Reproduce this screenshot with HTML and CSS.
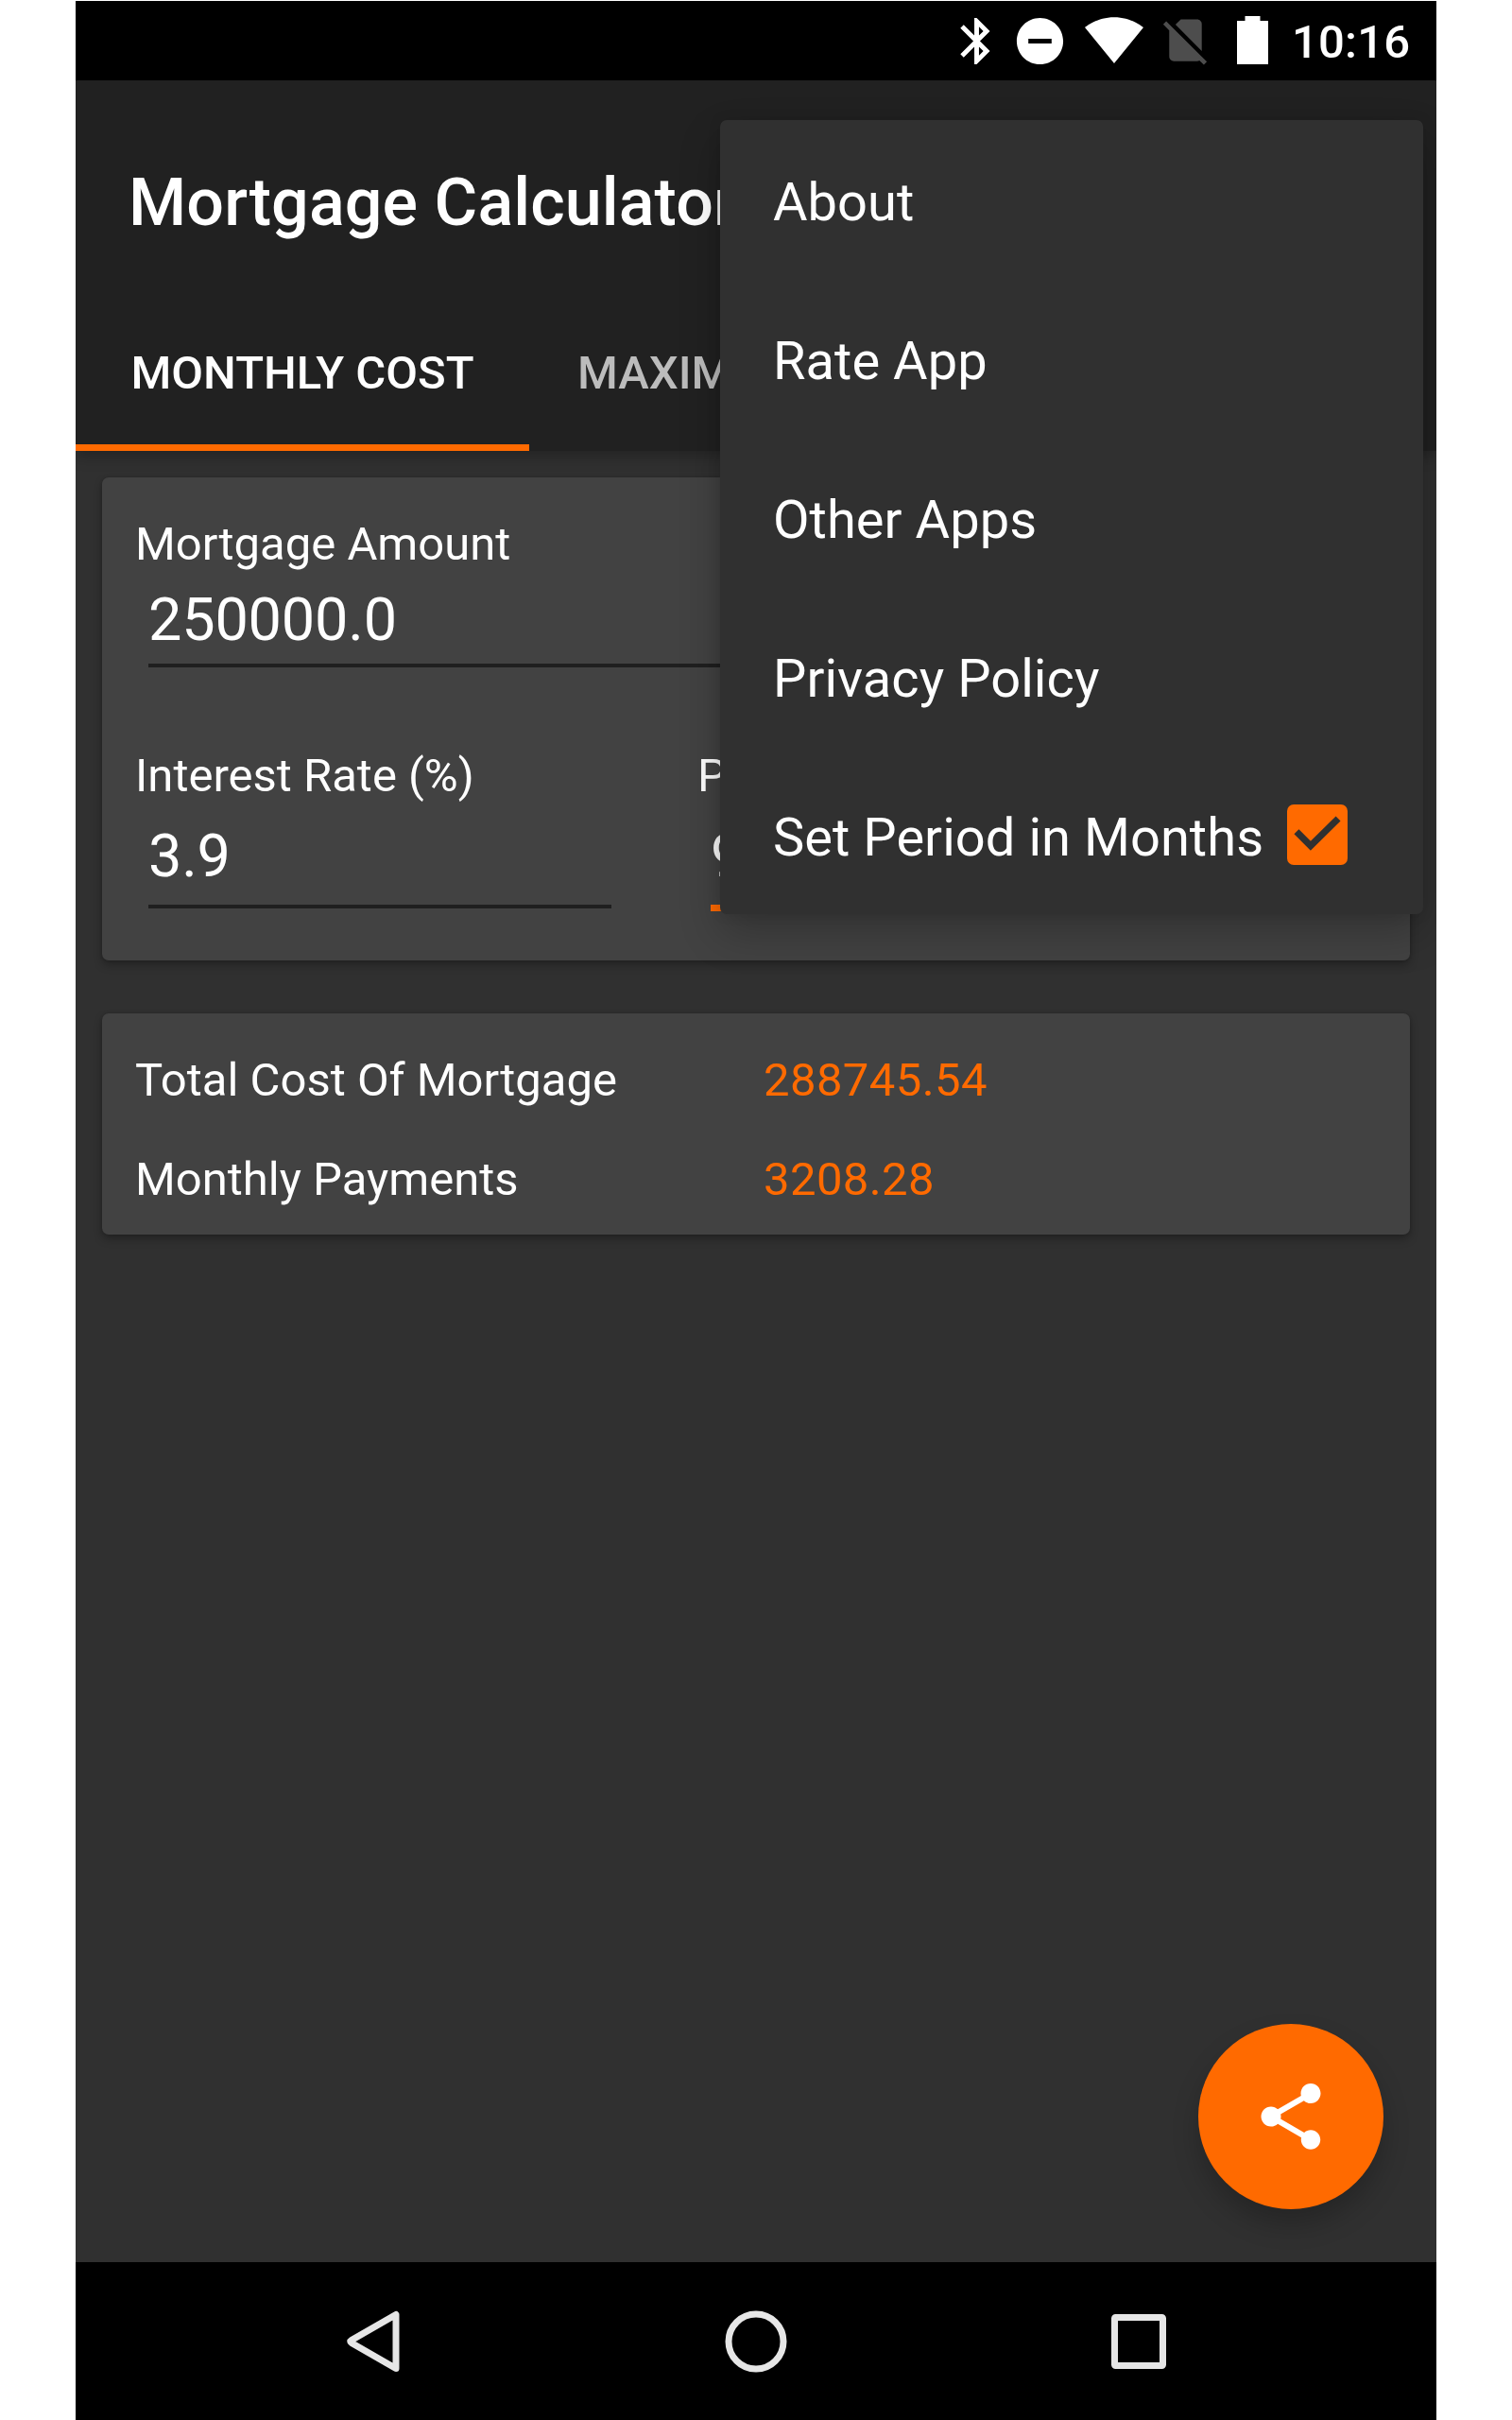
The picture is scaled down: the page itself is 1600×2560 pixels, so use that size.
FILE: index.html
```html
<!DOCTYPE html>
<html lang="en">
<head>
<meta charset="UTF-8">
<meta name="viewport" content="width=device-width, initial-scale=1.0">
<title>Mortgage Calculator</title>
<link rel="stylesheet" href="styles.css">
</head>
<body>
  <div class="phone">
    <div class="statusbar">
      <svg class="bluetooth" viewBox="0 0 24 24"><path d="M17.71 7.71L12 2h-1v7.59L6.41 5 5 6.41 10.59 12 5 17.59 6.41 19 11 14.41V22h1l5.71-5.71-4.3-4.29 4.3-4.29zM13 5.83l1.88 1.88L13 9.59V5.83zm1.88 10.46L13 18.17v-3.76l1.88 1.88z"/></svg>
      <svg class="dnd" viewBox="0 0 24 24"><path d="M12 2C6.48 2 2 6.48 2 12s4.480 10 10 10 10-4.480 10-10S17.520 2 12 2zm5 11H7v-2h10v2z"/></svg>
      <svg class="wifi" viewBox="0 0 26 24"><path d="M13 22L25.600 6.500C25.100 6.100 20.300 2.100 13 2.100S.9 6.100.4 6.500L13 22z"/></svg>
      <svg class="nosim" viewBox="0 0 24 24"><path d="M19 5c0-1.100-.9-2-2-2h-7L7.700 5.300 19 16.700V5zM3.700 3.900L2.400 5.200 5 7.800V19c0 1.100.9 2 2 2h10c.4 0 .7-.1 1-.3l1.900 1.900 1.300-1.300L3.700 3.900z"/></svg>
      <svg class="battery" viewBox="0 0 33 51"><path d="M8.500 0h16v5H33v46H0V5h8.500z"/></svg>
      <span class="clock">10:16</span>
    </div>

    <header class="appbar">
      <h1 id="title">Mortgage Calculator</h1>
      <nav class="tabs">
        <a class="tab active">MONTHLY COST</a>
        <a class="tab">MAXIMUM</a>
      </nav>
    </header>

    <main>
      <form class="card" id="mortgageForm">
        <div class="field">
          <label for="amount">Mortgage Amount</label>
          <input type="text" id="amount" name="amount" value="250000.0">
        </div>
        <div class="row">
          <div class="field">
            <label for="rate">Interest Rate (%)</label>
            <input type="text" id="rate" name="rate" value="3.9">
          </div>
          <div class="field">
            <label for="period">Period</label>
            <input type="text" id="period" name="period" class="focused" value="90">
          </div>
        </div>
      </form>

      <div class="card results">
        <span>Total Cost Of Mortgage</span>
        <span class="value">288745.54</span>
        <span>Monthly Payments</span>
        <span class="value">3208.28</span>
      </div>
    </main>

    <footer class="navbar">
      <svg viewBox="0 0 70 70"><path d="M59 6.500v57L12 36.500q-2.500-1.500 0-3z"/></svg>
      <svg viewBox="0 0 70 70"><circle cx="35" cy="35" r="29"/></svg>
      <svg viewBox="0 0 70 70"><rect x="9.500" y="9.500" width="51" height="51" rx="1"/></svg>
    </footer>

    <button class="fab" type="button" aria-label="Share">
      <svg viewBox="0 0 24 24"><path d="M18 16.080c-.76 0-1.440.3-1.960.77L8.910 12.700c.05-.23.09-.46.09-.7s-.04-.47-.09-.7l7.050-4.110c.54.5 1.250.81 2.040.81 1.660 0 3-1.340 3-3s-1.340-3-3-3-3 1.340-3 3c0 .24.04.47.09.7L8.040 9.810C7.500 9.310 6.790 9 6 9c-1.660 0-3 1.340-3 3s1.340 3 3 3c.79 0 1.500-.31 2.040-.81l7.120 4.160c-.05.21-.08.43-.08.65 0 1.610 1.310 2.920 2.920 2.920s2.920-1.310 2.920-2.920-1.310-2.920-2.920-2.920z"/></svg>
    </button>

    <ul class="menu">
      <li>About</li>
      <li>Rate App</li>
      <li>Other Apps</li>
      <li>Privacy Policy</li>
      <li>
        Set Period in Months
        <span class="checkbox">
          <svg viewBox="0 0 18 18"><path d="M2.800 8.100L7 12.300l8.200-8.100"/></svg>
        </span>
      </li>
    </ul>
  </div>
</body>
</html>
```
FILE: styles.css
```css
* {
  box-sizing: border-box;
}
body {
  margin: 0;
  padding-top: 1px;
  height: 2560px;
  overflow: hidden;
  background-color: #fff;
  font-family: Roboto, sans-serif;
  color: #fff;
}
.phone {
  position: relative;
  display: flex;
  flex-direction: column;
  width: 1440px;
  height: 2559px;
  margin: 0 auto;
  background-color: #303030;
  overflow: hidden;
}

/* status bar */
.statusbar {
  display: flex;
  align-items: flex-start;
  height: 84px;
  padding-left: 924px;
  background-color: #000;
}
.statusbar svg {
  flex: none;
  width: 59px;
  height: 59px;
  margin-top: 13px;
  fill: #fff;
}
.statusbar .dnd {
  margin-left: 8px;
}
.statusbar .wifi {
  width: 64px;
  margin: 12px 0 0 17px;
}
.statusbar .nosim {
  margin: 12px 0 0 14px;
  fill: #4d4d4d;
}
.statusbar .battery {
  width: 33px;
  height: 51px;
  margin: 16px 0 0 25px;
}
.clock {
  margin-left: 25px;
  font-size: 49px;
  font-weight: 500;
  line-height: 88px;
  letter-spacing: 0.2px;
}

/* app bar */
.appbar {
  position: relative;
  z-index: 1;
  flex: none;
  height: 392px;
  padding-top: 87px;
  background-color: #212121;
  box-shadow: 0 6px 14px rgba(0, 0, 0, 0.25);
}
h1 {
  margin: 0 0 53px;
  padding-left: 56px;
  font-size: 70px;
  font-weight: 500;
  line-height: 84px;
  letter-spacing: 0.1px;
}
.tabs {
  display: flex;
  height: 168px;
}
.tab {
  flex: none;
  padding: 4px 51px 0;
  font-size: 49px;
  font-weight: 500;
  line-height: 163px;
  white-space: nowrap;
  color: #bcbcbc;
}
.tab.active {
  width: 480px;
  padding: 4px 0 0;
  border-bottom: 7px solid #ff6a00;
  text-align: center;
  color: #fff;
}

/* cards */
main {
  flex: 1;
  padding: 28px;
}
.card {
  margin-bottom: 56px;
  padding: 42px 35px 0;
  border-radius: 7px;
  background-color: #424242;
  box-shadow: 0 5px 10px rgba(0, 0, 0, 0.28), 0 0 3px rgba(0, 0, 0, 0.2);
  font-size: 49px;
  line-height: 58px;
}
#mortgageForm {
  height: 511px;
}
.field {
  display: flex;
  flex-direction: column;
}
.row {
  display: grid;
  grid-template-columns: 518px minmax(0, 1fr);
  column-gap: 77px;
  margin-top: 86px;
}
input {
  min-width: 0;
  height: 101px;
  margin: 0 14px;
  padding: 4px 0 0;
  border: none;
  border-bottom: 4px solid #1f1f1f;
  background: none;
  font: 63px Roboto, sans-serif;
  letter-spacing: -0.2px;
  color: #fff;
}
.row input {
  height: 111px;
}
.row input.focused {
  height: 114px;
  border-bottom: 7px solid #ff6a00;
}
.results {
  display: grid;
  grid-template-columns: 665px 1fr;
  row-gap: 47px;
  align-content: start;
  height: 234px;
}
.value {
  letter-spacing: 0.4px;
  color: #ff6a00;
}

/* bottom navigation */
.navbar {
  display: flex;
  flex: none;
  justify-content: center;
  gap: 335px;
  height: 167px;
  padding-top: 49px;
  background-color: #000;
}
.navbar svg {
  width: 70px;
  height: 70px;
  fill: none;
  stroke: #e6e6e6;
  stroke-width: 7;
  stroke-linejoin: round;
}

.fab {
  position: absolute;
  right: 56px;
  bottom: 223px;
  display: flex;
  align-items: center;
  justify-content: center;
  width: 196px;
  height: 196px;
  padding: 0;
  border: none;
  border-radius: 50%;
  background-color: #ff6a00;
  box-shadow: 0 16px 28px rgba(0, 0, 0, 0.22);
}
.fab svg {
  width: 84px;
  height: 84px;
  fill: #fff;
}

/* overflow menu */
.menu {
  position: absolute;
  top: 126px;
  right: 14px;
  z-index: 2;
  width: 744px;
  margin: 0;
  padding: 0;
  border-radius: 7px;
  background-color: #303030;
  box-shadow: 0 20px 44px rgba(0, 0, 0, 0.24), 0 0 14px rgba(0, 0, 0, 0.1);
  font-size: 56px;
  letter-spacing: 0.05px;
  list-style: none;
}
.menu li {
  display: flex;
  align-items: center;
  height: 168px;
  padding: 6px 0 0 56px;
  white-space: nowrap;
}
.checkbox {
  width: 64px;
  height: 64px;
  margin: 0 0 6px 25px;
  border-radius: 7px;
  background-color: #ff6a00;
}
.checkbox svg {
  display: block;
  fill: none;
  stroke: #303030;
  stroke-width: 2;
}
```
